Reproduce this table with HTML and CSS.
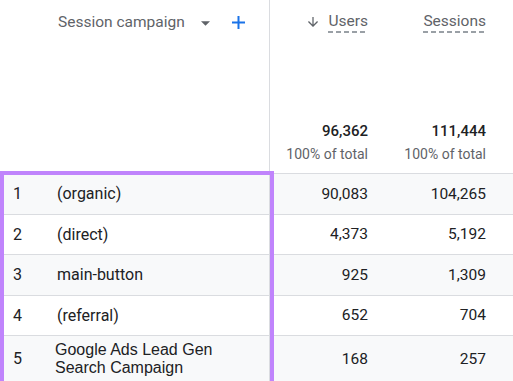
FILE: index.html
```html
<!DOCTYPE html>
<html>
<head>
<meta charset="utf-8">
<link rel="stylesheet" href="styles.css">
</head>
<body>
<div class="report">
  <div class="head">
    <div class="dimhead">
      <span class="dimlabel">Session campaign</span>
      <svg class="drop" width="9" height="5" viewBox="0 0 10 5"><path d="M0 0h10L5 5z" fill="#5f6368"/></svg>
      <svg class="plus" width="13" height="13" viewBox="0 0 13 13"><rect x="5.5" y="0" width="2" height="13" fill="#1a73e8"/><rect x="0" y="5.5" width="13" height="2" fill="#1a73e8"/></svg>
    </div>
    <div class="mhead users">
      <div class="mlabel">
        <svg class="arrow" width="10" height="10" viewBox="4 4 16 16"><path d="M20 12l-1.41-1.41L13 16.17V4h-2v12.17l-5.58-5.59L4 12l8 8 8-8z" fill="#5f6368"/></svg>
        <span class="dashed">Users</span>
      </div>
      <div class="total">96,362</div>
      <div class="pct">100% of total</div>
    </div>
    <div class="mhead sessions">
      <div class="mlabel"><span class="dashed">Sessions</span></div>
      <div class="total">111,444</div>
      <div class="pct">100% of total</div>
    </div>
  </div>

  <div class="row odd">
    <div class="dim"><span class="idx">1</span><span class="name">(organic)</span></div>
    <div class="val users">90,083</div>
    <div class="val sessions">104,265</div>
  </div>
  <div class="row">
    <div class="dim"><span class="idx">2</span><span class="name">(direct)</span></div>
    <div class="val users">4,373</div>
    <div class="val sessions">5,192</div>
  </div>
  <div class="row odd">
    <div class="dim"><span class="idx">3</span><span class="name">main-button</span></div>
    <div class="val users">925</div>
    <div class="val sessions">1,309</div>
  </div>
  <div class="row">
    <div class="dim"><span class="idx">4</span><span class="name">(referral)</span></div>
    <div class="val users">652</div>
    <div class="val sessions">704</div>
  </div>
  <div class="row odd last">
    <div class="dim"><span class="idx">5</span><span class="name arial">Google Ads Lead Gen<br>Search Campaign</span></div>
    <div class="val users">168</div>
    <div class="val sessions">257</div>
  </div>

  <div class="highlight"></div>
</div>
</body>
</html>
```
FILE: styles.css
```css
html, body {
  margin: 0;
  padding: 0;
  background: #ffffff;
}

body {
  font-family: Roboto, "Noto Sans", Arial, sans-serif;
  color: #202124;
  overflow: hidden;
}

.report {
  position: relative;
  width: 513px;
  height: 381px;
  overflow: hidden;
}

.head {
  display: flex;
  height: 174px;
  box-sizing: border-box;
  border-bottom: 1px solid #dadce0;
}

.dimhead {
  width: 270px;
  box-sizing: border-box;
  border-right: 1px solid #dadce0;
  padding: 13px 0 0 58px;
  display: flex;
  align-items: flex-start;
}

.dimlabel {
  font-size: 15.5px;
  line-height: 19px;
  color: #5f6368;
}

.drop {
  margin: 8px 0 0 16px;
}

.plus {
  margin: 3px 0 0 22px;
}

.mhead {
  box-sizing: border-box;
  padding: 12px 16px 10px 0;
  display: flex;
  flex-direction: column;
  align-items: flex-end;
}

.users {
  width: 114px;
}

.sessions {
  width: 118px;
}

.mlabel {
  display: flex;
  align-items: center;
  font-size: 15.5px;
  line-height: 19px;
  color: #5f6368;
}

.arrow {
  margin-right: 10px;
  margin-top: -2px;
}

.dashed {
  padding-bottom: 2px;
  background-image: repeating-linear-gradient(to right, #9aa0a6 0 5px, transparent 5px 8px);
  background-size: 100% 2px;
  background-position: 0 100%;
  background-repeat: no-repeat;
}

.total {
  margin-top: auto;
  font-size: 15px;
  line-height: 18px;
  font-weight: 500;
  color: #202124;
}

.pct {
  margin-top: 6px;
  font-size: 14px;
  line-height: 17px;
  color: #5f6368;
}

.row {
  display: flex;
  height: 40.5px;
  box-sizing: border-box;
  border-bottom: 1px solid #dadce0;
  background: #ffffff;
}

.row.odd {
  background: #f8f9fa;
}

.row.last {
  height: 46px;
}

.dim {
  width: 270px;
  box-sizing: border-box;
  border-right: 1px solid #dadce0;
  padding-left: 13px;
  display: flex;
  align-items: center;
  font-size: 16px;
}

.idx {
  width: 44px;
  flex: none;
}

.name.arial {
  font-family: "Liberation Sans", Arial, sans-serif;
  font-size: 16px;
  line-height: 18px;
  margin-left: -2px;
}

.val {
  box-sizing: border-box;
  padding-right: 16px;
  display: flex;
  align-items: center;
  justify-content: flex-end;
  font-size: 15.5px;
  color: #202124;
}

.highlight {
  position: absolute;
  left: 0;
  top: 171px;
  width: 274px;
  height: 230px;
  box-sizing: border-box;
  border: 4px solid #c084fc;
}
```
